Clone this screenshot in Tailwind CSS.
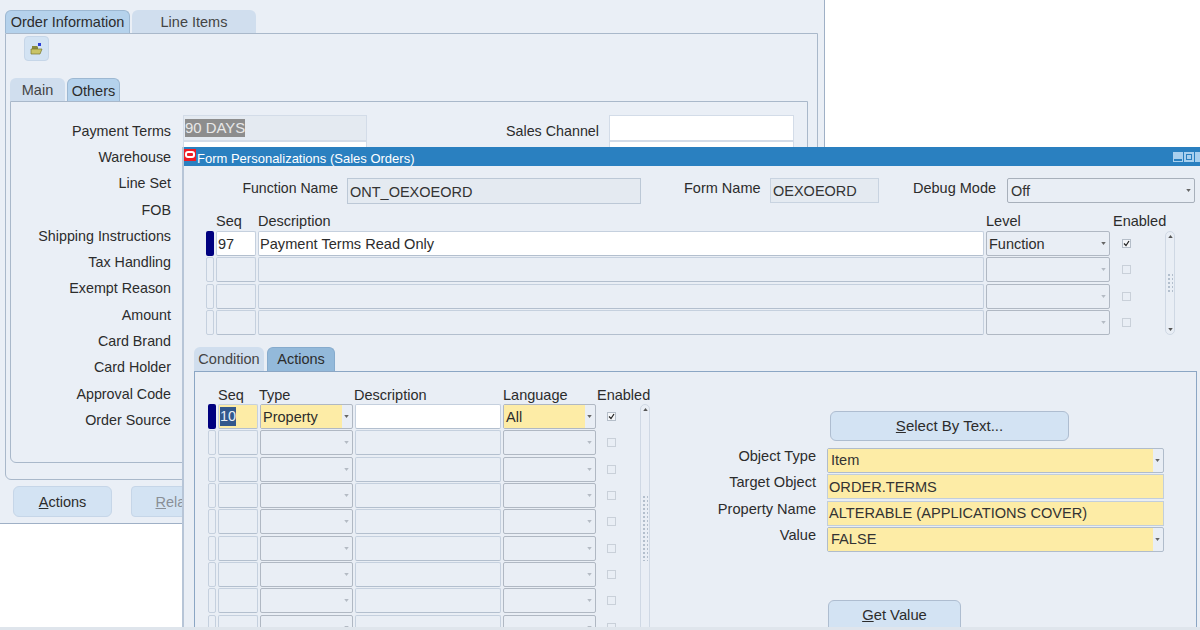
<!DOCTYPE html>
<html lang="en">
  <head>
    <meta charset="UTF-8" />
    <meta name="viewport" content="width=device-width, initial-scale=1.0" />
    <title>Form Personalizations</title>
    <script src="https://cdn.jsdelivr.net/npm/@tailwindcss/browser@4"></script>
  </head>
  <body class="relative w-[1200px] h-[630px] overflow-hidden bg-white font-['Liberation_Sans',Arial,sans-serif] text-[14.5px] leading-none text-[#2c2c2c]">

    <!-- back window: Sales Orders -->
    <div class="absolute left-0 top-0 w-[825px] h-[524px] bg-[#eaeff6] border-r border-b border-[#9fb0c6] pl-[5px] pt-[10px]">
      <div class="flex h-[23px] gap-[2px]">
        <div class="w-[125px] pt-[1px] bg-[#b5d2ec] border-t border-l border-r border-[#9db8d2] rounded-t-md flex items-center justify-center">Order Information</div>
        <div class="w-[124px] pt-[2px] bg-[#d0deee] rounded-t-md flex items-center justify-center text-[#444]">Line Items</div>
      </div>
      <div class="w-[813px] h-[447px] border border-[#a9b8ca] rounded-b-md pl-[4px]">
        <div class="ml-[14px] mt-[2px] w-[25px] h-[25px] bg-[#d3e3f3] border border-[#c6d6e8] rounded-sm flex items-center justify-center">
          <svg width="13" height="12" viewBox="0 0 13 12"><rect x="8" y="0" width="3" height="3" fill="#2b3fd8" /><path d="M2 3h5l1 1v2H2z" fill="#8a8a3c" /><path d="M1 6h11l-2 5H1z" fill="#c9c466" stroke="#77772e" stroke-width=".7" /></svg>
        </div>
        <div class="flex mt-[17px] h-[23px] gap-[2px]">
          <div class="w-[55px] pt-[2px] bg-[#d0deee] rounded-t-md flex items-center justify-center text-[#444]">Main</div>
          <div class="w-[53px] pt-[2px] bg-[#b5d2ec] border-t border-l border-r border-[#9db8d2] rounded-t-md flex items-center justify-center">Others</div>
        </div>
        <div class="flex w-[798px] h-[362px] border border-[#a9b8ca] bg-[#eaeff6] rounded-b-md">
          <div class="w-[160px] pt-[15.7px] text-right text-[14.3px]">
            <div class="h-[26.3px] flex items-center justify-end">Payment Terms</div>
            <div class="h-[26.3px] flex items-center justify-end">Warehouse</div>
            <div class="h-[26.3px] flex items-center justify-end">Line Set</div>
            <div class="h-[26.3px] flex items-center justify-end">FOB</div>
            <div class="h-[26.3px] flex items-center justify-end">Shipping Instructions</div>
            <div class="h-[26.3px] flex items-center justify-end">Tax Handling</div>
            <div class="h-[26.3px] flex items-center justify-end">Exempt Reason</div>
            <div class="h-[26.3px] flex items-center justify-end">Amount</div>
            <div class="h-[26.3px] flex items-center justify-end">Card Brand</div>
            <div class="h-[26.3px] flex items-center justify-end">Card Holder</div>
            <div class="h-[26.3px] flex items-center justify-end">Approval Code</div>
            <div class="h-[26.3px] flex items-center justify-end">Order Source</div>
          </div>
          <div class="ml-[12px] pt-[13px] w-[184px]">
            <div class="h-[26px] bg-[#e4eaf1] border border-[#d3dce8] flex items-center pl-[1px] text-[14.9px]"><span class="bg-[#8d8d8d] text-[#e8e8e8] py-[2px]">90 DAYS</span></div>
            <div class="h-[26px] bg-white border border-[#d3dce8]"></div>
          </div>
          <div class="w-[232px] pt-[16px] text-[14.3px]">
            <div class="h-[26.3px] flex items-center justify-end">Sales Channel</div>
          </div>
          <div class="ml-[10px] pt-[13px] w-[185px]">
            <div class="h-[26px] bg-white border border-[#d3dce8]"></div>
            <div class="h-[26px] bg-white border border-[#d3dce8]"></div>
          </div>
        </div>
      </div>
      <div class="flex mt-[6px] ml-[8px] gap-[19px]">
        <div class="w-[99px] h-[31px] pt-[2px] bg-[#d3e3f3] border border-[#c6d6e8] rounded-md flex items-center justify-center"><span><u>A</u>ctions</span></div>
        <div class="w-[99px] h-[31px] pt-[2px] bg-[#d3e3f3] border border-[#c6d6e8] rounded-sm flex items-center justify-center text-[#8a8f96]"><span><u>R</u>elated</span></div>
      </div>
    </div>

    <!-- front window: Form Personalizations -->
    <div class="absolute left-[182px] top-[147px] w-[1030px] h-[483px] bg-[#e9eef5] border-l-2 border-[#b7c5d7] overflow-hidden">
      <div class="flex items-center h-[19px] -ml-[2px] bg-[#2a80c0] text-[13px] text-white">
        <div class="ml-[2px] self-start mt-[2px] w-[12px] h-[12px] bg-[#ee1c25] flex items-start justify-center pt-[2px]">
          <div class="w-[10px] h-[7px] border-2 border-white rounded-[3px]"></div>
        </div>
        <span class="ml-[1px] pt-[4px]">Form Personalizations (Sales Orders)</span>
        <div class="flex ml-[759px] gap-[1px]">
          <div class="w-[10px] h-[10px] bg-[#a9d0ee] flex items-end p-[1px]"><div class="w-full h-[2px] bg-[#2a80c0]"></div></div>
          <div class="w-[10px] h-[10px] bg-[#a9d0ee] p-[2px]"><div class="w-full h-full border border-[#2a80c0]"></div></div>
          <div class="w-[10px] h-[10px] bg-[#a9d0ee]"></div>
        </div>
      </div>

      <div class="flex mt-[12px] h-[26px] whitespace-nowrap">
        <div class="w-[154px] text-right mt-[3px] text-[14.1px]">Function Name</div>
        <div class="ml-[9px] w-[294px] h-[26px] pt-[2px] bg-[#e4eaf1] border border-[#bcc8d6] flex items-center pl-[2px] text-[#333]">ONT_OEXOEORD</div>
        <div class="ml-[43px] w-[75px] text-right mt-[3px]">Form Name</div>
        <div class="ml-[11px] w-[109px] h-[25px] pt-[2px] bg-[#e4eaf1] border border-[#c8d3e0] flex items-center pl-[2px] text-[#333]">OEXOEORD</div>
        <div class="ml-[34px] w-[83px] text-right mt-[3px]">Debug Mode</div>
        <div class="relative ml-[11px] w-[188px] h-[25px] pt-[2px] bg-[#e9eef5] border border-[#a8b0bb] rounded-[2px] flex items-center pl-[3px] text-[#333]">Off
          <svg class="absolute right-[3px] top-[10px]" width="5" height="3" viewBox="0 0 6 4"><path d="M0 0h6L3 4z" fill="#666" /></svg>
        </div>
      </div>

      <div class="flex ml-[32px] mt-[10px] h-[17px] pb-[2px] items-center">
        <span class="w-[42px]">Seq</span><span class="w-[728px]">Description</span><span class="w-[127px]">Level</span><span>Enabled</span>
      </div>
      <div class="flex ml-[22px]">
        <div id="topRows" class="w-[927px]"></div>
        <div class="relative ml-[32px] w-[10px] h-[104px] border border-[#cfd8e4] rounded-[5px] flex items-center justify-center">
          <svg class="absolute top-[3px]" width="5" height="3" viewBox="0 0 6 4"><path d="M3 0l3 4H0z" fill="#555" /></svg>
          <div class="w-[6px] h-[20px] bg-[radial-gradient(#b3bfcd_1px,transparent_1px)] bg-[length:4px_4px]"></div>
          <svg class="absolute bottom-[3px]" width="5" height="3" viewBox="0 0 6 4"><path d="M0 0h6L3 4z" fill="#555" /></svg>
        </div>
      </div>

      <div class="flex ml-[10px] mt-[11px] h-[24px] gap-[3px]">
        <div class="w-[70px] bg-[#d0deee] rounded-t-md flex items-center justify-center text-[#444]">Condition</div>
        <div class="w-[68px] bg-[#93b9da] border-t border-l border-r border-[#86abcd] rounded-t-md flex items-center justify-center">Actions</div>
      </div>
      <div class="flex ml-[10px] w-[1003px] h-[260px] border-t border-l border-r border-[#8ba6c4]">
        <div class="w-[465px] pl-[13px] pt-[15px]">
          <div class="flex h-[17px] pb-[1px] items-center">
            <span class="ml-[10px] w-[41px]">Seq</span><span class="w-[95px]">Type</span><span class="w-[149px]">Description</span><span class="w-[94px]">Language</span><span>Enabled</span>
          </div>
          <div class="flex">
            <div id="lowerRows" class="w-[408px]"></div>
            <div class="relative ml-[24px] w-[10px] h-[240px] border border-[#cfd8e4] rounded-t-[5px] flex flex-col items-center">
              <svg class="absolute top-[3px]" width="5" height="3" viewBox="0 0 6 4"><path d="M3 0l3 4H0z" fill="#555" /></svg>
              <div class="mt-[90px] w-[6px] h-[66px] bg-[radial-gradient(#b3bfcd_1px,transparent_1px)] bg-[length:4px_4px]"></div>
            </div>
          </div>
        </div>
        <div class="w-[507px] pl-[167px] pt-[39px]">
          <div class="ml-[3px] w-[239px] h-[30px] pb-[2px] bg-[#d3e3f3] border border-[#aebdd0] rounded-md flex items-center justify-center text-[15px]"><span><u>S</u>elect By Text...</span></div>
          <div class="mt-[7px] -ml-[168px] grid grid-cols-[157px_337px] gap-x-[11px] gap-y-[1.3px] text-[14.6px]">
            <span class="h-[25px] pt-[1px] text-right">Object Type</span>
            <div class="relative h-[25px] bg-[#e9eef5] border border-[#b0bccb] rounded-[2px] flex items-center text-[#333]"><div class="w-[325px] h-full bg-[#fdeca6] flex items-center pl-[3px]">Item</div>
              <svg class="absolute right-[3px] top-[10px]" width="5" height="3" viewBox="0 0 6 4"><path d="M0 0h6L3 4z" fill="#666" /></svg>
            </div>
            <span class="h-[25px] pt-[1px] text-right">Target Object</span>
            <div class="h-[25px] bg-[#fdeca6] border border-[#c2cedb] flex items-center pl-[1px] text-[#333]">ORDER.TERMS</div>
            <span class="h-[25px] pt-[1px] text-right">Property Name</span>
            <div class="h-[25px] bg-[#fdeca6] border border-[#c2cedb] flex items-center pl-[1px] text-[#333]">ALTERABLE (APPLICATIONS COVER)</div>
            <span class="h-[25px] pt-[1px] text-right">Value</span>
            <div class="relative h-[25px] bg-[#e9eef5] border border-[#b0bccb] rounded-[2px] flex items-center text-[#333]"><div class="w-[325px] h-full bg-[#fdeca6] flex items-center pl-[3px]">FALSE</div>
              <svg class="absolute right-[3px] top-[10px]" width="5" height="3" viewBox="0 0 6 4"><path d="M0 0h6L3 4z" fill="#666" /></svg>
            </div>
          </div>
          <div class="mt-[48px] ml-[1px] w-[133px] h-[34px] pb-[3px] bg-[#d3e3f3] border border-[#aebdd0] rounded-t-md flex items-center justify-center text-[14.8px]"><span><u>G</u>et Value</span></div>
        </div>
      </div>
    </div>

    <div class="absolute left-0 bottom-0 w-full h-[3px] bg-[#dfe5ec]"></div>

    <script>
      const arrow = (fill) => `<svg class="absolute right-[3px] top-[10px]" width="5" height="3" viewBox="0 0 6 4"><path d="M0 0h6L3 4z" fill="${fill}" /></svg>`
      const empty = 'h-[25px] shrink-0 bg-[#e9eef5] border border-[#c5d0de] border-b-[#b3bfce] rounded-[2px]'
      const combo = 'relative h-[25px] shrink-0 bg-[#e9eef5] border border-[#b0b8c3] rounded-[2px]'
      const mark = (done, left) => done
        ? `<svg class="${left} mt-[8px] shrink-0" width="9" height="9" viewBox="0 0 9 9"><rect x=".5" y=".5" width="8" height="8" fill="#f4f6f9" stroke="#b5bec9" /><path d="M2 4.5l2 2 3-4.5" fill="none" stroke="#222" stroke-width="1.2" /></svg>`
        : `<div class="${left} mt-[8px] w-[9px] h-[9px] shrink-0 border border-[#c9d0d9]"></div>`

      const topRows = document.getElementById('topRows')
      for (let i = 0; i < 4; i++) {
        const first = i === 0
        topRows.insertAdjacentHTML('beforeend', `
          <div class="flex gap-[2px] h-[26.3px]">
            <div class="w-[8px] h-[25px] shrink-0 rounded-[2px] ${first ? 'bg-[#00007f]' : 'bg-[#e9eef5] border border-[#c5d0de]'}"></div>
            <div class="w-[40px] ${empty} ${first ? 'bg-white pl-[1px] pt-[2px] flex items-center' : ''}">${first ? '97' : ''}</div>
            <div class="w-[726px] ${empty} ${first ? 'bg-white pl-[1px] pt-[2px] flex items-center text-[14.6px]' : ''}">${first ? 'Payment Terms Read Only' : ''}</div>
            <div class="w-[124px] ${combo} pl-[2px] pt-[2px] flex items-center">${first ? 'Function' : ''}${arrow(first ? '#666' : '#b4bbc4')}</div>
            ${mark(first, 'ml-[10px]')}
          </div>`)
      }

      const lowerRows = document.getElementById('lowerRows')
      for (let i = 0; i < 9; i++) {
        const first = i === 0
        lowerRows.insertAdjacentHTML('beforeend', `
          <div class="flex gap-[2px] h-[26.3px]">
            <div class="w-[8px] h-[25px] shrink-0 rounded-[2px] ${first ? 'bg-[#00007f]' : 'bg-[#e9eef5] border border-[#c5d0de]'}"></div>
            <div class="w-[40px] ${empty} ${first ? 'bg-[#fdeca6] pl-[1px] flex items-center' : ''}">${first ? '<span class="bg-[#33588c] text-[#e8eef5] py-[2px]">10</span>' : ''}</div>
            <div class="w-[93px] ${combo} flex">${first ? '<div class="w-[81px] h-full bg-[#fdeca6] pl-[2px] pt-[2px] flex items-center">Property</div>' : ''}${arrow(first ? '#666' : '#b4bbc4')}</div>
            <div class="w-[146px] ${empty} ${first ? 'bg-white' : ''}"></div>
            <div class="w-[93px] ${combo} flex">${first ? '<div class="w-[81px] h-full bg-[#fdeca6] pl-[2px] pt-[2px] flex items-center">All</div>' : ''}${arrow(first ? '#666' : '#b4bbc4')}</div>
            ${mark(first, 'ml-[9px]')}
          </div>`)
      }
    </script>
  </body>
</html>
